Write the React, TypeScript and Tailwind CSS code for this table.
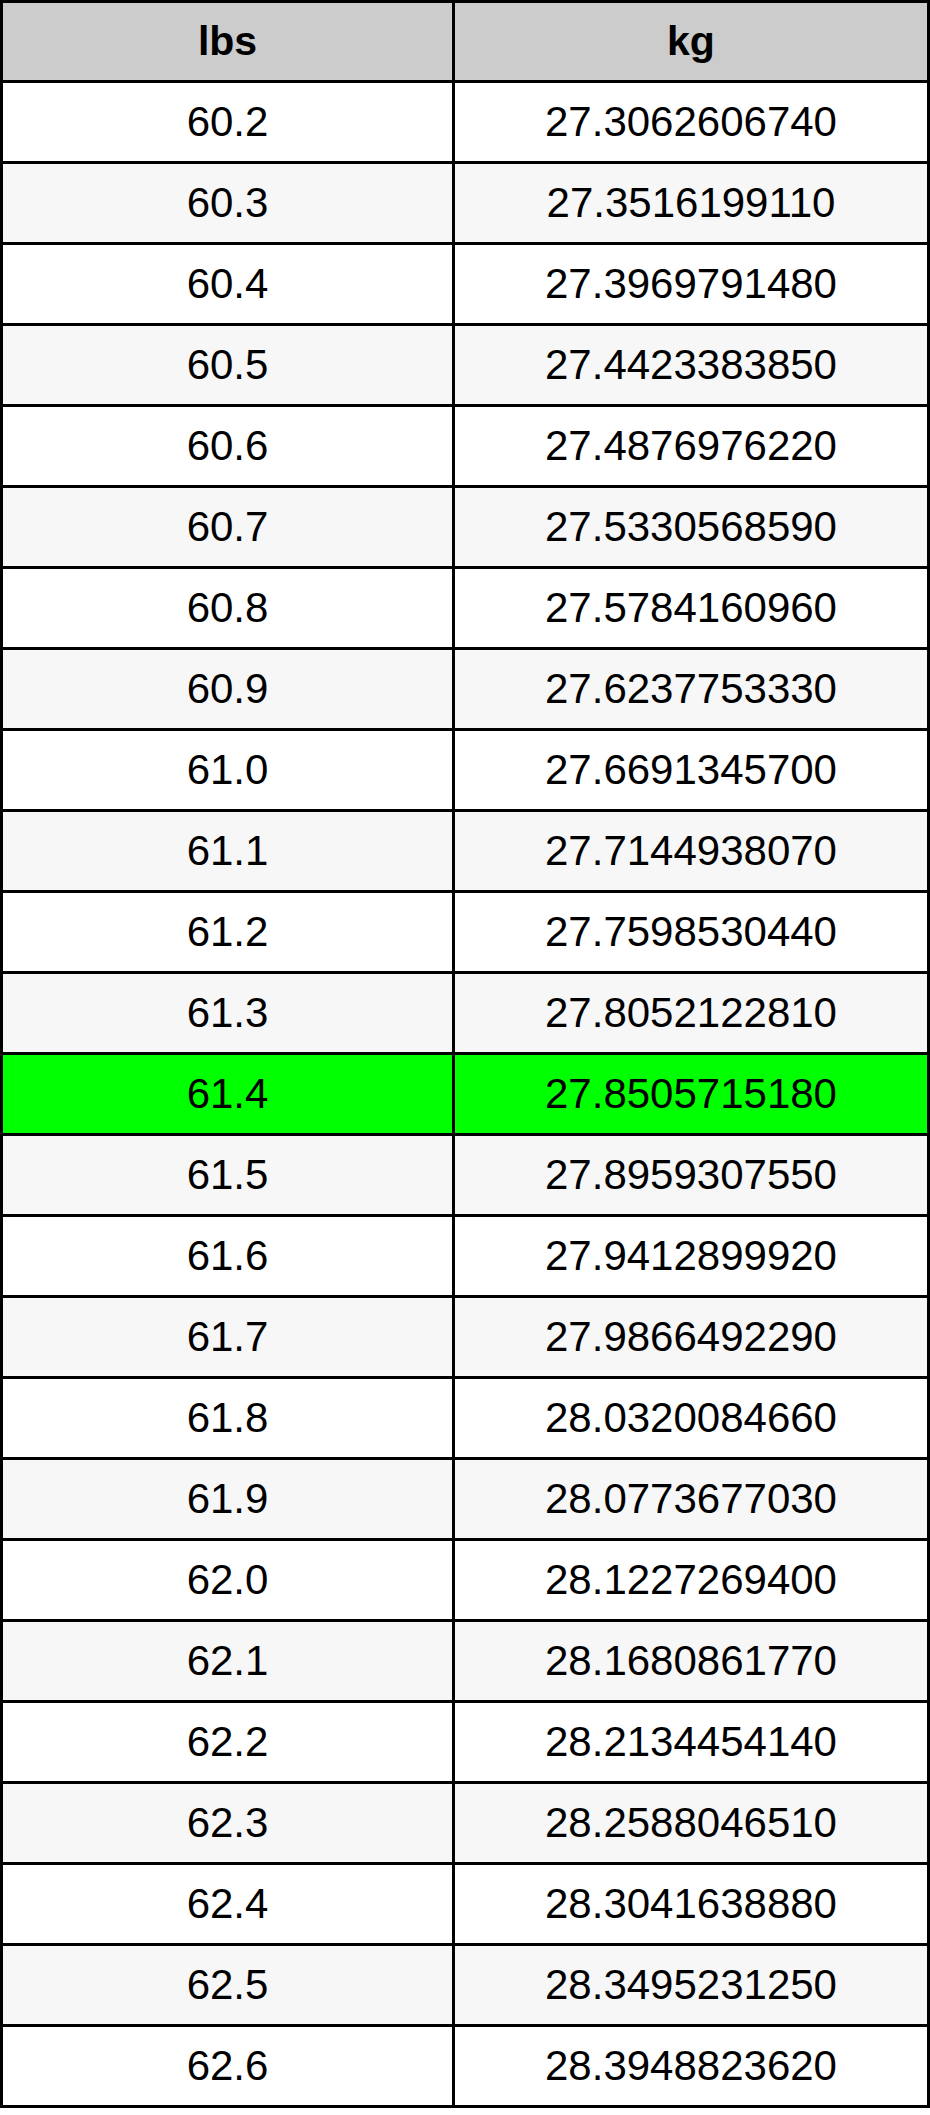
const rows: [string, string][] = [
  ["60.2", "27.3062606740"],
  ["60.3", "27.3516199110"],
  ["60.4", "27.3969791480"],
  ["60.5", "27.4423383850"],
  ["60.6", "27.4876976220"],
  ["60.7", "27.5330568590"],
  ["60.8", "27.5784160960"],
  ["60.9", "27.6237753330"],
  ["61.0", "27.6691345700"],
  ["61.1", "27.7144938070"],
  ["61.2", "27.7598530440"],
  ["61.3", "27.8052122810"],
  ["61.4", "27.8505715180"],
  ["61.5", "27.8959307550"],
  ["61.6", "27.9412899920"],
  ["61.7", "27.9866492290"],
  ["61.8", "28.0320084660"],
  ["61.9", "28.0773677030"],
  ["62.0", "28.1227269400"],
  ["62.1", "28.1680861770"],
  ["62.2", "28.2134454140"],
  ["62.3", "28.2588046510"],
  ["62.4", "28.3041638880"],
  ["62.5", "28.3495231250"],
  ["62.6", "28.3948823620"],
];

// highlighted row is the looked-up value
const current = "61.4";

export default function App() {
  return (
    <div className="w-[930px] bg-white font-['Liberation_Sans',Arial,sans-serif] text-black">
      <table className="w-full table-fixed border-collapse border-[3px] border-black text-center text-[42px] leading-none">
        <colgroup>
          <col className="w-[452px]" />
          <col />
        </colgroup>
        <thead>
          <tr className="bg-[#cccccc]">
            <th className="h-[80px] border-[3px] border-black text-[41px] font-bold">lbs</th>
            <th className="h-[80px] border-[3px] border-black text-[41px] font-bold">kg</th>
          </tr>
        </thead>
        <tbody>
          {rows.map(([lbs, kg], i) => {
            const bg =
              lbs === current ? "bg-[#00ff00]" : i % 2 === 1 ? "bg-[#f7f7f7]" : "bg-white";
            return (
              <tr key={lbs} className={bg}>
                <td className="h-[81px] border-[3px] border-black">{lbs}</td>
                <td className="h-[81px] border-[3px] border-black">{kg}</td>
              </tr>
            );
          })}
        </tbody>
      </table>
    </div>
  );
}
